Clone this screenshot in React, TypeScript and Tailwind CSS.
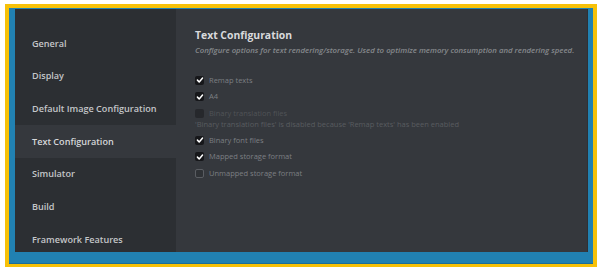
const navItems = [
  "General",
  "Display",
  "Default Image Configuration",
  "Text Configuration",
  "Simulator",
  "Build",
  "Framework Features",
];

type Opt = { label: string; state: "checked" | "unchecked" | "disabled"; note?: string };

const options: Opt[] = [
  { label: "Remap texts", state: "checked" },
  { label: "A4", state: "checked" },
  {
    label: "Binary translation files",
    state: "disabled",
    note: "'Binary translation files' is disabled because 'Remap texts' has been enabled",
  },
  { label: "Binary font files", state: "checked" },
  { label: "Mapped storage format", state: "checked" },
  { label: "Unmapped storage format", state: "unchecked" },
];

const Box = ({ state }: { state: Opt["state"] }) => {
  if (state === "checked") {
    return (
      <span className="w-[9px] h-[9px] rounded-[2px] bg-[#16171a] flex items-center justify-center shrink-0">
        <svg viewBox="0 0 10 10" className="w-[8px] h-[8px]">
          <path d="M1.8 5.2 L4 7.4 L8.2 2.6" fill="none" stroke="#ffffff" strokeWidth="1.9" strokeLinecap="round" strokeLinejoin="round" />
        </svg>
      </span>
    );
  }
  if (state === "disabled") {
    return <span className="w-[9px] h-[9px] rounded-[2px] bg-[#26282c] shrink-0" />;
  }
  return <span className="w-[9px] h-[9px] rounded-[2px] border border-[#5a5d62] bg-[#2f3236] shrink-0" />;
};

const App = () => {
  return (
    <div
      className="w-[600px] h-[271px] bg-white pl-[5px] pt-[4px] pr-[3px] pb-[4px]"
      style={{ fontFamily: "'Open Sans', 'Noto Sans', sans-serif" }}
    >
      <div className="h-full bg-[#f7c108] pl-[4px] pt-[4px] pr-[4px] pb-[3px]">
        <div className="h-full bg-[#2181b2] pl-[6px] pt-[1px] pr-[5px] pb-[11px] border-b border-[#1b6e98]">
          <div className="h-full flex overflow-hidden">
            <nav className="w-[161px] bg-[#2c2f33] pt-[18px] shrink-0">
              {navItems.map((item) => (
                <div
                  key={item}
                  className={`h-[32.7px] flex items-center pl-[17px] text-[9.1px] font-semibold whitespace-nowrap ${
                    item === "Text Configuration" ? "bg-[#35383d] text-[#d6d7d9]" : "text-[#c4c6c9]"
                  }`}
                >
                  {item}
                </div>
              ))}
            </nav>
            <main className="flex-1 bg-[#35383d] pl-[19px] pt-[19px] border-r border-[#2e3135]">
              <h1 className="text-[10.4px] leading-[14px] font-bold text-[#d9dadc]">Text Configuration</h1>
              <p className="mt-[3px] text-[7.8px] leading-[11px] font-semibold italic text-[#85888c] whitespace-nowrap">
                Configure options for text rendering/storage. Used to optimize memory consumption and rendering speed.
              </p>
              <div className="mt-[16.2px]">
                {options.map((o) => (
                  <div key={o.label}>
                    <div className="h-[16.5px] flex items-center gap-[5px]">
                      <Box state={o.state} />
                      <span
                        className={`text-[7.5px] ${
                          o.state === "disabled" ? "text-[#505357]" : "text-[#7c7f83]"
                        }`}
                      >
                        {o.label}
                      </span>
                    </div>
                    {o.note && (
                      <div className="-mt-[3px] mb-[3px] h-[10.5px] leading-[10.5px] text-[7.5px] text-[#595c60] whitespace-nowrap">
                        {o.note}
                      </div>
                    )}
                  </div>
                ))}
              </div>
            </main>
          </div>
        </div>
      </div>
    </div>
  );
};

export default App;
